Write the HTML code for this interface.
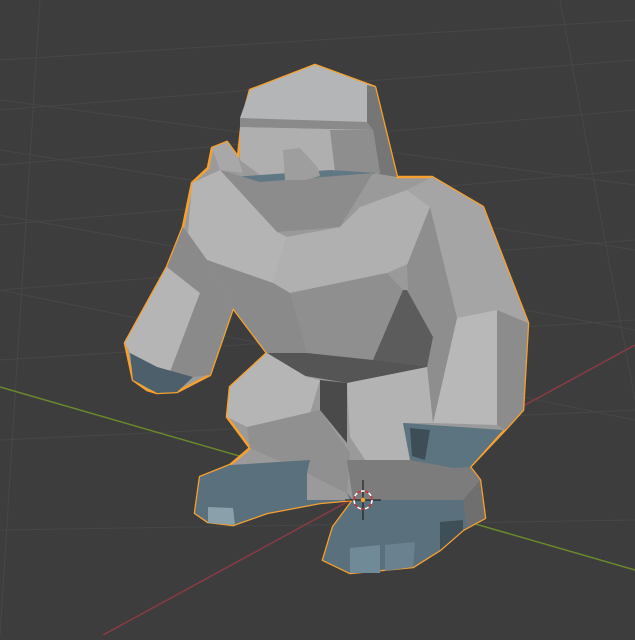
<!DOCTYPE html>
<html><head><meta charset="utf-8"><style>html,body{margin:0;padding:0;background:#3d3d3d;overflow:hidden}</style></head>
<body>
<svg width="635" height="635" viewBox="0 0 635 635" xmlns="http://www.w3.org/2000/svg">
<rect width="635" height="635" fill="#3d3d3d"/>
<g stroke="#474747" stroke-width="1" fill="none">
<line x1="0" y1="60" x2="635" y2="20"/>
<line x1="0" y1="110" x2="635" y2="60"/>
<line x1="0" y1="165" x2="635" y2="110"/>
<line x1="0" y1="225" x2="635" y2="170"/>
<line x1="0" y1="290" x2="635" y2="240"/>
<line x1="0" y1="360" x2="635" y2="320"/>
<line x1="0" y1="440" x2="635" y2="410"/>
<line x1="0" y1="530" x2="635" y2="520"/>
<line x1="0" y1="150" x2="635" y2="250"/>
<line x1="0" y1="215" x2="635" y2="330"/>
<line x1="0" y1="290" x2="635" y2="420"/>
<line x1="0" y1="100" x2="635" y2="185"/>
<line x1="40" y1="0" x2="0" y2="635"/>
<line x1="560" y1="0" x2="635" y2="400"/>
</g>
<line x1="103" y1="635" x2="635" y2="345" stroke="#8a3a44" stroke-width="1.5"/>
<line x1="0" y1="387" x2="635" y2="570" stroke="#6a8a2a" stroke-width="1.5"/>

<polygon fill="#9a9a9a" stroke="#f5a030" stroke-width="2.6" stroke-linejoin="round" points="315,65 375,87 397,177 432,177 483,207 528,323 523,410 505,430 470,467 480,480 485,518 463,530 440,550 413,567 350,573 323,560 333,527 353,500 320,503 267,513 233,525 208,522 195,513 200,477 230,465 250,448 227,417 230,387 267,353 233,308 210,375 177,392 157,393 147,390 133,380 125,343 167,267 183,227 192,183 208,168 212,148 227,142 238,157 242,120 250,90"/>
<g stroke="none">
<polygon fill="#b3b5b6" points="250,90 315,65 375,87 367,122 327,123 240,118"/>
<polygon fill="#767676" points="367,85 375,87 397,177 373,173 367,122"/>
<polygon fill="#8a8a8a" points="240,118 367,122 373,130 240,127"/>
<polygon fill="#afafaf" points="240,127 373,130 380,173 330,180 260,175 240,160"/>
<polygon fill="#8e8e8e" points="330,130 373,130 380,173 335,172"/>
<polygon fill="#5f7884" points="233,177 330,170 377,173 330,185 260,185"/>
<polygon fill="#8c8c8c" points="220,170 260,182 373,173 340,227 277,232 247,210"/>
<polygon fill="#9e9e9e" points="283,150 300,148 318,168 320,176 305,180 285,180"/>
<polygon fill="#a8a8a8" points="212,148 227,142 238,157 243,173 220,170"/>
<polygon fill="#b4b4b4" points="192,183 220,170 277,232 287,237 273,283 207,260 188,233"/>
<polygon fill="#b0b0b0" points="287,237 340,227 360,207 407,190 430,207 410,263 387,273 290,293 273,283"/>
<polygon fill="#a5a5a5" points="407,190 432,177 483,207 528,323 457,318 430,207"/>
<polygon fill="#b8b8b8" points="457,318 497,310 497,425 433,423"/>
<polygon fill="#8c8c8c" points="497,310 528,323 523,410 505,430 497,425"/>
<polygon fill="#8e8e8e" points="430,207 457,318 433,423 397,422 410,340 407,265"/>
<polygon fill="#8a8a8a" points="207,260 273,283 290,293 300,327 307,353 267,353 233,308"/>
<polygon fill="#8f8f8f" points="290,293 387,273 403,290 373,360 307,353 300,327"/>
<polygon fill="#5c5c5c" points="387,290 407,290 433,337 427,367 347,383 300,360 373,360 403,290"/>
<polygon fill="#555555" points="267,353 307,353 373,360 427,367 347,383 300,375"/>
<polygon fill="#b5b5b5" points="125,343 167,267 200,293 170,372 157,367 130,353"/>
<polygon fill="#8a8a8a" points="167,267 183,227 207,260 233,308 210,375 193,377 170,372 200,293"/>
<polygon fill="#4d5f6a" points="130,353 157,367 193,377 177,392 157,393 133,380"/>
<polygon fill="#b5b5b5" points="230,387 267,353 307,377 320,380 307,423 273,437 247,427 227,417"/>
<polygon fill="#909090" points="247,427 320,410 350,453 347,493 307,473 250,448"/>
<polygon fill="#4a4a4a" points="320,380 347,383 347,443 320,410"/>
<polygon fill="#b3b3b3" points="347,383 427,367 433,423 403,423 410,460 367,463 350,437"/>
<polygon fill="#7c7c7c" points="347,460 410,460 470,467 480,480 463,500 353,500"/>
<polygon fill="#5c7380" points="403,423 503,430 470,467 453,468 427,463 410,460"/>
<polygon fill="#3e4e57" points="410,428 430,430 425,460 412,456"/>
<polygon fill="#5a717d" points="230,465 310,460 307,473 347,493 353,500 320,503 267,513 233,525 208,522 195,513 200,477"/>
<polygon fill="#9a9a9a" points="307,473 347,493 350,500 307,500"/>
<polygon fill="#8aa0ab" points="208,507 233,508 235,525 208,523"/>
<polygon fill="#5a717d" points="353,500 463,500 485,518 463,530 440,550 413,567 350,573 323,560 333,527"/>
<polygon fill="#6f6f6f" points="463,500 480,480 485,518 467,527"/>
<polygon fill="#3f4f58" points="440,522 463,520 463,530 440,550"/>
<polygon fill="#718a97" points="350,548 380,545 380,573 350,573"/>
<polygon fill="#6a8290" points="385,545 415,542 413,567 385,571"/>
</g>
<line x1="363" y1="480" x2="363" y2="520" stroke="#111" stroke-width="1"/>
<line x1="345" y1="500" x2="381" y2="500" stroke="#111" stroke-width="1"/>
<circle cx="363" cy="500" r="9" fill="none" stroke="#fff" stroke-width="1.5" stroke-dasharray="4 4"/>
<circle cx="363" cy="500" r="9" fill="none" stroke="#d03030" stroke-width="1.5" stroke-dasharray="4 4" stroke-dashoffset="4"/>
<circle cx="363" cy="500" r="2.2" fill="#f5a030"/>
</svg>
</body></html>
